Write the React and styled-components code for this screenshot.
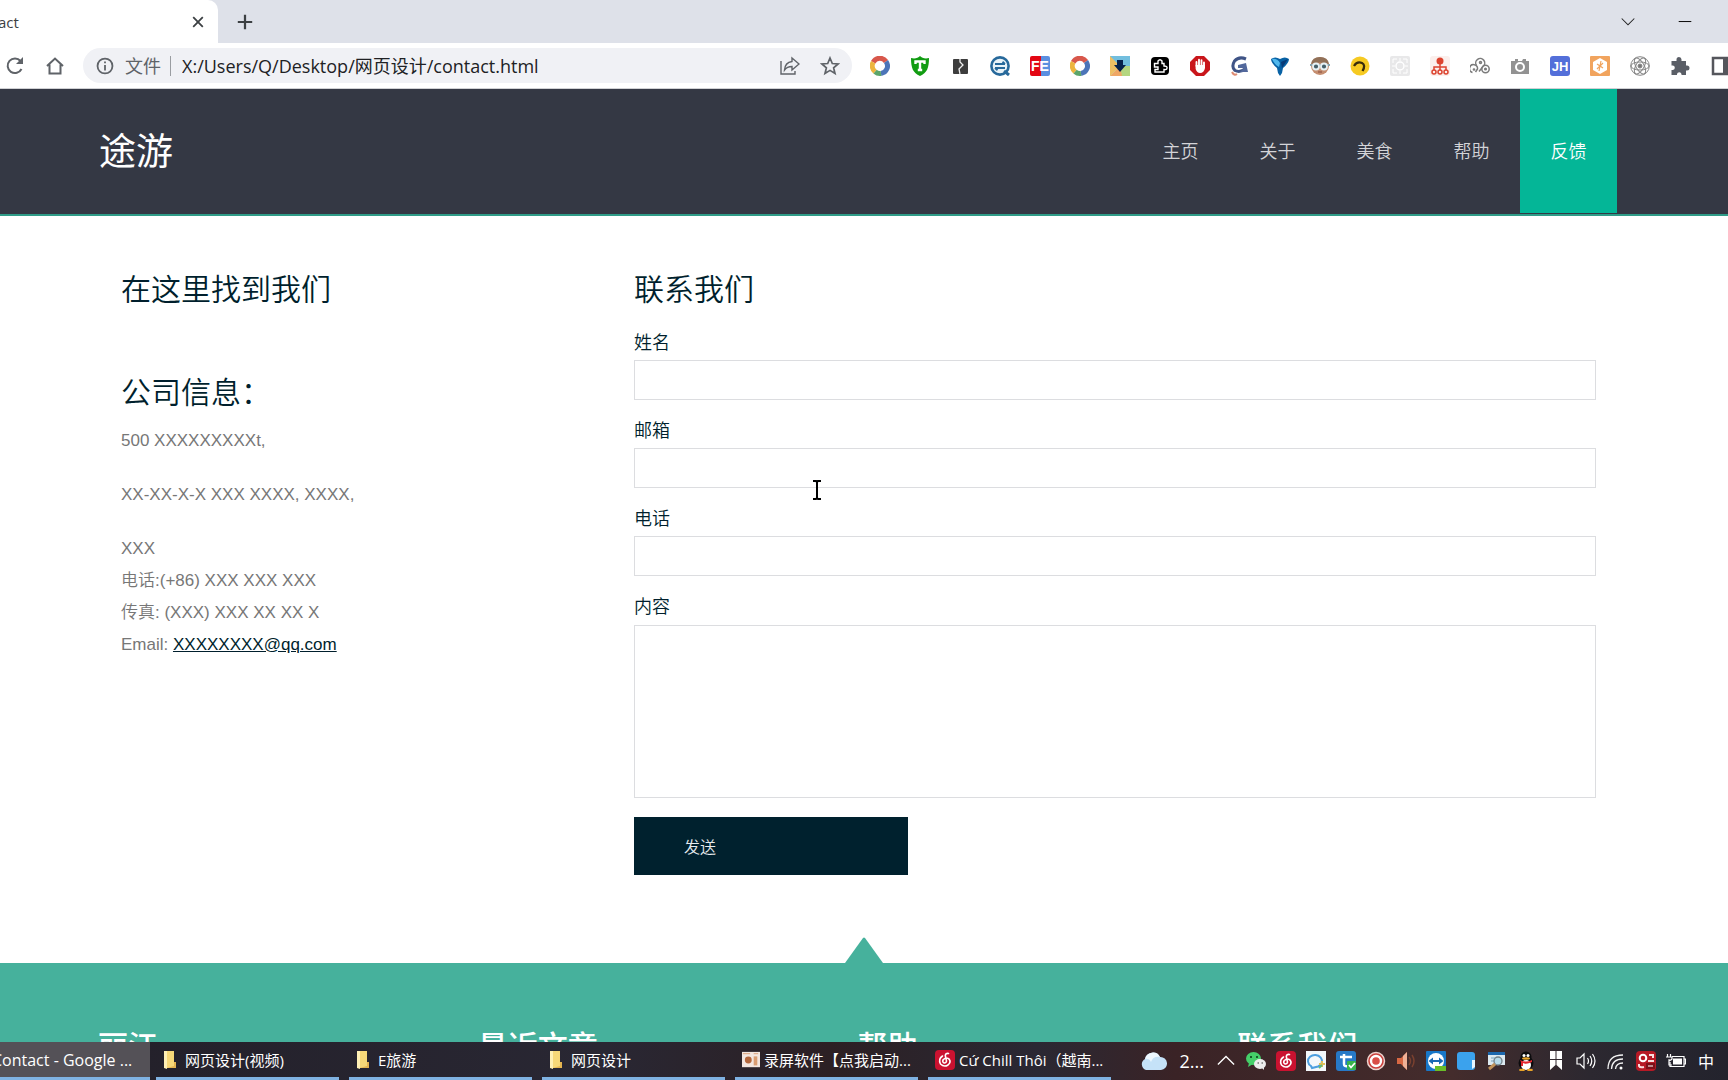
import React, { useState } from 'react';
import styled, { createGlobalStyle, css } from 'styled-components';

const uiFont = `'Open Sans', 'Noto Sans CJK SC', sans-serif`;
const pageFont = `'Liberation Sans', 'Noto Sans CJK SC', sans-serif`;

const GlobalStyle = createGlobalStyle`
    * { box-sizing: border-box; }
    body {
        margin: 0;
        font-family: ${pageFont};
        background: #fff;
    }
    h1, h2, p { margin: 0; font-weight: normal; }
    button { font: inherit; border: 0; padding: 0; background: none; cursor: pointer; }
    svg { flex: none; }
`;

// desktop + browser chrome
const Desktop = styled.div`
    display: flex;
    flex-direction: column;
    height: 100vh;
    overflow: hidden;
`;

const TabStrip = styled.div`
    display: flex;
    flex: none;
    align-items: center;
    height: 43px;
    background: #dee1e9;
    color: #3c4043;
`;

const Tab = styled.div`
    display: flex;
    align-items: center;
    justify-content: space-between;
    width: 218px;
    height: 43px;
    padding-right: 12px;
    background: #fff;
    border-top-right-radius: 10px;
    font: 15px ${uiFont};
    overflow: hidden;
`;

const TabTitle = styled.span`
    margin-left: -35px;
`;

const StripButton = styled.button`
    display: flex;
    align-items: center;
    justify-content: center;
    flex: none;
    width: ${props => props.$width};
    height: 38px;
    color: inherit;
`;

const Spacer = styled.div`
    flex: 1;
`;

const WindowButtons = styled.div`
    display: flex;
    margin-right: 15px;
`;

const Toolbar = styled.div`
    display: flex;
    flex: none;
    align-items: center;
    height: 46px;
    border-bottom: 1px solid #d0d1d4;
    background: #fff;
    color: #5f6368;
`;

const ToolButton = styled.button`
    display: flex;
    align-items: center;
    justify-content: center;
    flex: none;
    width: 40px;
    height: 35px;
    color: inherit;
`;

const NavButtons = styled.div`
    display: flex;
    margin: 0 8px 0 -5px;
`;

const AddressBar = styled.div`
    display: flex;
    flex: 1;
    align-items: center;
    min-width: 0;
    height: 35px;
    padding: 0 2px 0 13px;
    border-radius: 18px;
    background: #f0f1f5;
    font: 18px ${uiFont};
`;

const Scheme = styled.span`
    flex: none;
    margin-left: 11px;
    padding-right: 9px;
    border-right: 1px solid #9a9da1;
    line-height: 20px;
`;

const UrlInput = styled.input`
    flex: 1;
    min-width: 0;
    border: 0;
    padding: 0 0 2px 11px;
    outline: 0;
    background: none;
    color: #202124;
    font: 18px ${uiFont};
`;

const Extensions = styled.div`
    display: flex;
    flex: none;
    margin: 0 -12px 0 8px;
`;

// web page
const Page = styled.div`
    position: relative;
    display: flex;
    flex-direction: column;
    flex: 1;
    min-height: 0;
    overflow: hidden;
`;

const Header = styled.header`
    display: flex;
    flex: none;
    align-items: center;
    justify-content: space-between;
    height: 127px;
    padding: 0 111px 0 99px;
    border-bottom: 2px solid #2f9c88;
    background: #343844;
`;

const Logo = styled.h1`
    padding-bottom: 6px;
    color: #fff;
    font: 400 37px 'KaiTi', 'Noto Sans CJK SC', sans-serif;
`;

const Nav = styled.nav`
    display: flex;
    height: 100%;
    padding-bottom: 1px;
`;

const NavLink = styled.a`
    display: flex;
    align-items: center;
    justify-content: center;
    width: 97px;
    padding-bottom: 2px;
    color: #d3d4d8;
    font-size: 18px;
    font-weight: 350;
    text-decoration: none;
    ${props => props.$active && css`
        background: #04b697;
        color: #fff;
    `}
`;

const Content = styled.main`
    display: grid;
    grid-template-columns: 8fr 15fr;
    flex: none;
    padding: 52px 132px 88px 121px;
`;

const Title = styled.h2`
    color: #001f2d;
    font-size: 30px;
    font-weight: 350;
    line-height: 44px;
`;

const CompanyTitle = styled(Title)`
    margin-top: 59px;
    margin-bottom: 10px;
`;

const Address = styled.address`
    color: #777;
    font-size: 17px;
    font-style: normal;
    font-weight: 350;
    line-height: 32px;
`;

const AddressLine = styled.p`
    margin-bottom: ${props => props.$spaced ? '22px' : '0'};
    font-weight: inherit;
`;

const MailLink = styled.a`
    color: #001f2d;
`;

const Form = styled.form`
    display: flex;
    flex-direction: column;
    align-items: stretch;
    padding-top: 10px;
`;

const Label = styled.label`
    padding-top: 4px;
    color: #001f2d;
    font-size: 18px;
    font-weight: 350;
    line-height: 34px;
`;

const fieldStyle = css`
    width: 100%;
    border: 1px solid #dcdde0;
    border-radius: 0;
    padding: 8px;
    outline: 0;
    background: #fff;
    color: #001f2d;
    font: 16px ${pageFont};
`;

const TextInput = styled.input`
    ${fieldStyle}
    height: 40px;
    margin-bottom: 10px;
`;

const TextArea = styled.textarea`
    ${fieldStyle}
    height: 173px;
    margin: 1px 0 19px;
    resize: none;
`;

const SendButton = styled.button`
    align-self: flex-start;
    width: 274px;
    height: 58px;
    padding-left: 50px;
    background: #00212e;
    color: #e8ecee;
    font-size: 16px;
    font-weight: 350;
    text-align: left;
`;

const Footer = styled.footer`
    position: relative;
    display: grid;
    grid-template-columns: repeat(4, 1fr);
    flex: none;
    padding: 62px 111px 80px 98px;
    background: #46b19c;
`;

const FooterArrow = styled.svg`
    position: absolute;
    top: -26px;
    left: 50%;
    transform: translateX(-50%);
`;

const FooterTitle = styled.h2`
    color: #fff;
    font-size: 30px;
    font-weight: 500;
    line-height: 44px;
`;

const Cursor = styled.svg`
    position: absolute;
    top: 391px;
    left: 812px;
`;

// taskbar
const Taskbar = styled.div`
    display: flex;
    flex: none;
    height: 38px;
    padding-right: 7px;
    background: linear-gradient(90deg, #221f28 0%, #292733 35%, #2c2024 48%, #2a2833 60%, #3a2326 68%, #442c2c 84%, #2c2830 92%, #23232d 100%);
    color: #fff;
    font: 15px ${uiFont};
`;

const Task = styled.button`
    display: flex;
    align-items: center;
    gap: 4px;
    flex: none;
    width: 183px;
    height: 38px;
    margin-right: 10px;
    padding: 0 7px;
    border-bottom: 3px solid #7fb2e2;
    color: inherit;
    white-space: nowrap;
    ${props => props.$active && css`
        width: 187px;
        margin-left: -37px;
        margin-right: 6px;
        background: #545157;
        font-size: 16px;
    `}
`;

const Weather = styled.button`
    display: flex;
    align-items: center;
    gap: 13px;
    padding-right: 7px;
    color: inherit;
    font-size: 18px;
`;

const TrayButton = styled.button`
    display: flex;
    align-items: center;
    justify-content: center;
    flex: none;
    width: 30px;
    height: 38px;
    color: inherit;
    font-size: 16px;
`;

const Svg = ({ size = 20, children, ...rest }) => (
    <svg width={size} height={size} viewBox="0 0 20 20" fill="none" aria-hidden="true" {...rest}>{children}</svg>
);

const iconText = { fontFamily: 'Liberation Sans, sans-serif', fontWeight: 'bold', textAnchor: 'middle' };

const RingIcon = () => (
    <Svg strokeWidth="5">
        <path d="M3.2 6.2A7.5 7.5 0 0 1 16 5.5" stroke="#d8574b" />
        <path d="M16 5.5A7.5 7.5 0 0 1 11 17.4" stroke="#4c74b8" />
        <path d="M11 17.4A7.5 7.5 0 0 1 5 15.6" stroke="#5ba56a" />
        <path d="M5 15.6A7.5 7.5 0 0 1 3.2 6.2" stroke="#ecb53f" />
    </Svg>
);

const extensions = [
    { name: 'Colour ring', icon: <RingIcon /> },
    { name: 'Shield', icon: <Svg>
        <path d="M1 2C5 3 8 2 10 0C12 2 15 3 19 2C19 12 17 17 10 20C3 17 1 12 1 2Z" fill="#119c12" />
        <path d="M5.5 8V5.5H14.5V8M10 5.5V14M7.8 14H12.2" stroke="#fff" strokeWidth="2.4" />
    </Svg> },
    { name: 'Dark panel', icon: <Svg>
        <rect x="3" y="3" width="15" height="15" rx="1" fill="#3d3d3d" />
        <path d="M10 3V6L13 9L9 13L10 18" stroke="#eee" strokeWidth="1.3" />
    </Svg> },
    { name: 'Search swap', icon: <Svg>
        <circle cx="10" cy="10" r="8.6" fill="#e9f3f8" stroke="#27699b" strokeWidth="2.6" />
        <path d="M14 15L19 19" stroke="#27699b" strokeWidth="3" />
        <path d="M5 8H15M5 12H15M12.5 5.8L15 8M7.5 14.2L5 12" stroke="#27699b" strokeWidth="1.8" />
    </Svg> },
    { name: 'FE', icon: <Svg>
        <path d="M2 0H11V20H2Q0 20 0 18V2Q0 0 2 0Z" fill="#e30613" />
        <path d="M11 0H18Q20 0 20 2V18Q20 20 18 20H11Z" fill="#5b8fe0" />
        <text x="10" y="15" fontSize="14" fill="#fff" {...iconText}>FE</text>
    </Svg> },
    { name: 'Colour ring', icon: <RingIcon /> },
    { name: 'Download', icon: <Svg>
        <path d="M0 0H20V10H0Z" fill="#72bede" />
        <path d="M0 0L10 10L0 20Z" fill="#eebf63" />
        <path d="M0 20L10 10H20V20Z" fill="#b4d680" />
        <path d="M0 20L10 10L12 20Z" fill="#efa765" />
        <path d="M7 4H13V9H16L10 16L4 9H7Z" fill="#07224d" />
    </Svg> },
    { name: 'Puzzle', icon: <Svg>
        <rect x="1" y="1" width="18" height="18" rx="4" fill="#000" />
        <path d="M8 7.5V5Q10 2.5 12 5V7.5H14V10Q17.5 10 17 12Q17 14 14 13.5V16H5V13.5H8V11H4.5V7.5Z" stroke="#fff" strokeWidth="1.4" />
    </Svg> },
    { name: 'Ad blocker', icon: <Svg>
        <path d="M6 0H14L20 6V14L14 20H6L0 14V6Z" fill="#c9161b" />
        <path d="M6.5 10V6M9 9V3.8M11.5 9V4.3M14 11V6.5" stroke="#fff" strokeWidth="1.9" strokeLinecap="round" />
        <path d="M5.6 9H15V12Q14 17 10 17Q7 17 5.6 13Z" fill="#fff" />
    </Svg> },
    { name: 'G swirl', icon: <Svg>
        <path d="M16 3Q9 0 4.5 5Q1 11 5 14.5Q10 17 15 13" stroke="#3f5486" strokeWidth="3" />
        <path d="M8 9L16 7L18 16H10L14 12H8Z" fill="#52689c" />
        <path d="M2 16Q4 20 7 18" stroke="#dd8b73" strokeWidth="2" />
    </Svg> },
    { name: 'Funnel', icon: <Svg>
        <path d="M1 3Q5 0 10 3Q15 0 19 3Q19 7 13 12L12 17L10 20L8 17L7 12Q1 7 1 3Z" fill="#0862a5" />
        <path d="M2 3Q7 2 10 7L9 11Q4 8 2 3Z" fill="#51b8ed" />
        <path d="M11 6L18 3L12 12Z" fill="#083b78" />
    </Svg> },
    { name: 'Face', icon: <Svg>
        <circle cx="10" cy="10" r="9" fill="#c58e70" />
        <path d="M1 8Q2 1 10 1Q18 1 19 8Q10 5 1 8Z" fill="#917058" />
        <path d="M0 9H20" stroke="#8aa2ac" strokeWidth="2" />
        <circle cx="6" cy="10.5" r="3" fill="#46606b" stroke="#e7f1f5" strokeWidth="1.8" />
        <circle cx="14" cy="10.5" r="3" fill="#46606b" stroke="#e7f1f5" strokeWidth="1.8" />
        <path d="M8 16H12" stroke="#874b3c" />
    </Svg> },
    { name: 'Yellow arc', icon: <Svg>
        <circle cx="10" cy="10" r="9.5" fill="#f6ca22" />
        <path d="M4 10Q7 5 12 7Q16 9 12.5 15" stroke="#382c0c" strokeWidth="2.3" />
    </Svg> },
    { name: 'Pale pattern', icon: <Svg>
        <rect width="20" height="20" rx="2" fill="#e8e8e9" />
        <circle cx="10" cy="10" r="4" stroke="#fff" strokeWidth="1.5" />
        <path d="M3 3H7M13 3H17M3 17H7M13 17H17M3 3V7M17 3V7M3 13V17M17 13V17M10 2V5M10 15V18M2 10H5M15 10H18" stroke="#fff" />
    </Svg> },
    { name: 'Sitemap', icon: <Svg>
        <rect width="20" height="20" rx="3" fill="#fbefec" />
        <circle cx="10" cy="5" r="3.5" fill="#dc432f" />
        <path d="M10 8V14M4 14V11H16V14" stroke="#dc432f" strokeWidth="1.5" />
        <circle cx="4" cy="16" r="2" stroke="#dc432f" strokeWidth="1.5" />
        <circle cx="10" cy="16" r="2" stroke="#dc432f" strokeWidth="1.5" />
        <circle cx="16" cy="16" r="2" stroke="#dc432f" strokeWidth="1.5" />
    </Svg> },
    { name: 'Cloud rings', icon: <Svg stroke="#7b7b7b" strokeWidth="1.5">
        <path d="M2.5 16.5A4 4 0 1 1 7.5 13L5.500 16" />
        <path d="M6.500 9.500A4.500 4.500 0 1 1 13 10.500L9 15.500" />
        <circle cx="15.5" cy="13" r="3.7" />
        <circle cx="10.5" cy="6.5" r="1" />
        <circle cx="15.5" cy="13" r=".8" />
        <circle cx="4" cy="13.500" r=".6" />
    </Svg> },
    { name: 'Camera', icon: <Svg>
        <path d="M1 5H5V3H8V5H12L13 3H16V5H19V18H1Z" fill="#929292" />
        <circle cx="10" cy="11" r="4" fill="#929292" stroke="#fff" strokeWidth="2" />
    </Svg> },
    { name: 'JH', icon: <Svg>
        <rect width="20" height="20" rx="3" fill="#536fd9" />
        <text x="10" y="15" fontSize="13" fill="#fff" {...iconText}>JH</text>
    </Svg> },
    { name: 'Hexagon', icon: <Svg>
        <rect width="20" height="20" rx="1" fill="#f1a45e" />
        <path d="M10 2L17 6V14L10 18L3 14V6Z" fill="#fff" />
        <path d="M11 5L10 10L9 15M7 8L13 12M13 7L7 13" stroke="#f1a45e" strokeWidth="1.2" />
    </Svg> },
    { name: 'Atom', icon: <Svg stroke="#858585">
        <circle cx="10" cy="10" r="9.3" />
        <ellipse cx="10" cy="10" rx="9" ry="4" />
        <ellipse cx="10" cy="10" rx="9" ry="4" transform="rotate(60 10 10)" />
        <ellipse cx="10" cy="10" rx="9" ry="4" transform="rotate(120 10 10)" />
        <circle cx="10" cy="10" r="2" fill="#777" />
    </Svg> },
    { name: 'Extensions', icon: <Svg>
        <path d="M1.5 5H6.5V3.5A2.5 2.5 0 0 1 11.5 3.5V5H16V9.5H17A2.5 2.5 0 0 1 17 14.5H16V19H11.5V18A2.3 2.3 0 0 0 7 18V19H1.5V14H3A2.3 2.3 0 0 0 3 9.5H1.5Z" fill="#5a5e66" />
    </Svg> },
    { name: 'Side panel', icon: <Svg>
        <rect x="3" y="2" width="18" height="16" stroke="#55565c" strokeWidth="2.5" />
        <rect x="13" y="2" width="8" height="16" fill="#55565c" />
    </Svg> },
];

const FolderIcon = () => (
    <svg width="18" height="20" viewBox="0 0 18 20" aria-hidden="true">
        <path d="M1 1H11V13H13V18H1Z" fill="#f7d878" />
        <path d="M1 1H4V19L1 18Z" fill="#fff0b5" />
        <path d="M11 12H13V18H4L11 16Z" fill="#e4b450" />
    </svg>
);

const CloudMusicIcon = () => (
    <Svg>
        <rect width="20" height="20" rx="4" fill="#ca1230" />
        <path d="M13.5 3.5Q10.5 3 10.3 5.5L11.5 11A1.9 1.9 0 1 1 8.5 9.5Q11 6.8 14 9Q16.5 12 13 15Q9 17.5 5.5 14Q3 9 7.5 6" stroke="#fff" strokeWidth="1.6" strokeLinecap="round" />
    </Svg>
);

const RecorderIcon = () => (
    <Svg size={18}>
        <rect y="1" width="20" height="17" fill="#f3e6df" />
        <circle cx="7" cy="10" r="3.8" fill="#b4673c" />
        <rect x="13" y="6" width="4" height="10" fill="#d99c71" />
        <path d="M1 3H9M13 3H18" stroke="#d99c71" />
    </Svg>
);

const tasks = [
    { title: 'Contact - Google ...', icon: <Svg size={18} />, active: true },
    { title: '网页设计(视频)', icon: <FolderIcon /> },
    { title: 'E旅游', icon: <FolderIcon /> },
    { title: '网页设计', icon: <FolderIcon /> },
    { title: '录屏软件【点我启动...', icon: <RecorderIcon /> },
    { title: 'Cứ Chill Thôi（越南...', icon: <CloudMusicIcon /> },
];

const tray = [
    { name: 'Show hidden icons', icon: <Svg size={18}><path d="M1 14L10 5L19 14" stroke="#fff" strokeWidth="1.5" /></Svg> },
    { name: 'WeChat', icon: <Svg>
        <ellipse cx="7.5" cy="7.5" rx="7.5" ry="6.5" fill="#45cf69" />
        <path d="M3 12L2 16L7 13" fill="#45cf69" />
        <ellipse cx="14" cy="13" rx="6" ry="5" fill="#ececec" />
        <path d="M16 17L18 19V16" fill="#ececec" />
        <path d="M4 6H6M10 6H12" stroke="#175c2a" strokeWidth="2" />
        <path d="M11.5 12H13M15.5 12H17" stroke="#777" strokeWidth="1.5" />
    </Svg> },
    { name: 'Cloud music', icon: <CloudMusicIcon /> },
    { name: 'Chat', icon: <Svg>
        <rect width="20" height="20" fill="#f4f8fb" />
        <path d="M5 15A7 6 0 1 1 12 15.5L6 17Z" stroke="#4d9fe0" strokeWidth="2" />
        <path d="M16 10V16M13 13H19" stroke="#dfbf58" strokeWidth="2" />
        <path d="M13 17L16 14" stroke="#63b978" strokeWidth="2" />
    </Svg> },
    { name: 'Sync', icon: <Svg>
        <rect width="20" height="20" rx="3" fill="#2779c7" />
        <path d="M4 6H16M8 3V13Q8 16 12 15" stroke="#fff" strokeWidth="2.5" />
        <rect x="11" y="10" width="9" height="9" rx="1" fill="#37b34a" />
        <path d="M13 14L15 16.5L19 12" stroke="#fff" strokeWidth="1.7" />
    </Svg> },
    { name: 'Record', icon: <Svg>
        <circle cx="10" cy="10" r="8.5" fill="#ca403c" stroke="#ecd3ce" strokeWidth="1.5" />
        <circle cx="10" cy="10" r="5" fill="#d94f47" stroke="#fff" strokeWidth="2.4" />
    </Svg> },
    { name: 'Sound', icon: <Svg>
        <path d="M1 7H5L11 1V19L5 13H1Z" fill="#d86843" />
        <path d="M7 5L11 1V19L7 15Z" fill="#efb197" />
        <path d="M13 6Q16 10 13 14M16 4Q20 10 16 16" stroke="#79402f" strokeWidth="1.5" />
    </Svg> },
    { name: 'Remote desktop', icon: <Svg>
        <rect width="20" height="20" rx="1" fill="#1877c8" />
        <circle cx="10" cy="10" r="8" fill="#fff" />
        <path d="M2.5 10L7 6.5V9H13V6.5L17.5 10L13 13.5V11H7V13.5Z" fill="#1768b4" />
        <rect x="9" y="15" width="11" height="5" fill="#69bd28" />
    </Svg> },
    { name: 'Notes', icon: <Svg>
        <rect x="1" y="1" width="18" height="18" rx="3" fill="#3ba2ed" />
        <path d="M16 9H19V16L16 18Z" fill="#e6f5ff" />
    </Svg> },
    { name: 'Inspector', icon: <Svg>
        <rect x="2" y="1" width="17" height="13" fill="#dce9f0" />
        <path d="M2 2.5H19" stroke="#1c67ad" strokeWidth="3" />
        <path d="M5 7H12M5 10H10" stroke="#7ba5be" />
        <circle cx="12" cy="10" r="4" fill="#b6dbea" stroke="#73828a" strokeWidth="1.3" />
        <path d="M9 13L3 18" stroke="#bf925a" strokeWidth="3" />
    </Svg> },
    { name: 'QQ', icon: <Svg>
        <ellipse cx="10" cy="12" rx="7.5" ry="7" fill="#0b0b0d" />
        <circle cx="10" cy="6" r="5.5" fill="#0b0b0d" />
        <ellipse cx="10" cy="14" rx="5" ry="5" fill="#fff" />
        <circle cx="8" cy="4.5" r="1.5" fill="#fff" />
        <circle cx="12" cy="4.5" r="1.5" fill="#fff" />
        <ellipse cx="10" cy="7.5" rx="4" ry="1.2" fill="#e9a327" />
        <path d="M4 9Q10 12 16 9L16 11Q10 14 7 12V15H5V11Z" fill="#e3262d" />
        <ellipse cx="6" cy="19" rx="3" ry="1.2" fill="#e9a327" />
        <ellipse cx="14" cy="19" rx="3" ry="1.2" fill="#e9a327" />
    </Svg> },
    { name: 'Bookmark', icon: <Svg>
        <path d="M4 0H9.5V8H4ZM10.5 0H16V8H10.5ZM4 9H9.5V14L4 19ZM10.5 9H16V19L10.5 14Z" fill="#fff" />
    </Svg> },
    { name: 'Volume', icon: <Svg stroke="#fff" strokeWidth="1.2">
        <path d="M1 7H4L8 3V17L4 13H1Z" />
        <path d="M11.500 7Q13.5 10 11.5 13M14 5Q17.5 10 14 15M16.5 3Q21.5 10 16.5 17" />
    </Svg> },
    { name: 'Wi-Fi', icon: <Svg stroke="#f3f3f3" strokeWidth="1.3">
        <path d="M2 18Q2 4 17 4M5.5 18Q6 8 17 8M9.5 18Q10 12 17 12" />
        <circle cx="15" cy="17" r="1.5" fill="#fff" stroke="none" />
    </Svg> },
    { name: 'Capture', icon: <Svg>
        <rect width="20" height="20" rx="4" fill="#b71925" />
        <circle cx="7" cy="7" r="3.3" stroke="#fff" strokeWidth="2" />
        <path d="M13 4H17V7M3 13V15Q4 17 8 16M12 10H18" stroke="#f8dede" strokeWidth="2" />
        <rect x="10" y="12" width="9" height="6" fill="#7d1018" />
        <path d="M12 15H17" stroke="#fff" />
    </Svg> },
    { name: 'Battery', icon: <Svg stroke="#fff" strokeWidth="1.2">
        <path d="M6 5.5H18V15.5H4V11M18 8H19.5V13H18" />
        <rect x="7" y="7.5" width="9" height="6" fill="#fff" stroke="none" />
        <path d="M1.5 3V6M4.5 3V6M0 6H6V8Q3 11 3 8M3 9V14H6" />
    </Svg> },
    { name: 'Input method', icon: '中' },
];

const navItems = ['主页', '关于', '美食', '帮助', '反馈'];
const fields = [
    { id: 'name', label: '姓名', type: 'text' },
    { id: 'email', label: '邮箱', type: 'email' },
    { id: 'phone', label: '电话', type: 'tel' },
];
const footerTitles = ['丽江', '最近文章', '帮助', '联系我们'];

const BrowserBar = () => {
    const [url, setUrl] = useState('X:/Users/Q/Desktop/网页设计/contact.html');

    return (
        <>
            <TabStrip>
                <Tab>
                    <TabTitle>Contact</TabTitle>
                    <StripButton $width="16px" aria-label="Close tab">
                        <Svg size={12}><path d="M2 2L18 18M18 2L2 18" stroke="#3c4043" strokeWidth="3" /></Svg>
                    </StripButton>
                </Tab>
                <StripButton $width="54px" aria-label="New tab">
                    <Svg size={16}><path d="M10 1V19M1 10H19" stroke="#3c4043" strokeWidth="2.8" /></Svg>
                </StripButton>
                <Spacer />
                <WindowButtons>
                    <StripButton $width="57px" aria-label="Search tabs">
                        <Svg size={14}><path d="M1 5L10 14L19 5" stroke="#222" strokeWidth="1.5" /></Svg>
                    </StripButton>
                    <StripButton $width="57px" aria-label="Minimise">
                        <Svg size={14}><path d="M1 9.3H19" stroke="#111" strokeWidth="1.5" /></Svg>
                    </StripButton>
                </WindowButtons>
            </TabStrip>
            <Toolbar>
                <NavButtons>
                    <ToolButton aria-label="Reload">
                        <Svg stroke="currentColor" strokeWidth="2"><path d="M16.5 13A7.3 7.3 0 1 1 15.5 5" /><path d="M18 1V8H11Z" fill="currentColor" stroke="none" /></Svg>
                    </ToolButton>
                    <ToolButton aria-label="Home">
                        <Svg stroke="currentColor" strokeWidth="2"><path d="M2 10L10 2.5L18 10M4.5 8.5V17.5H15.5V8.5" /></Svg>
                    </ToolButton>
                </NavButtons>
                <AddressBar>
                    <Svg size={18} stroke="currentColor" strokeWidth="2"><circle cx="10" cy="10" r="8.3" /><path d="M10 9V15M10 5V7" /></Svg>
                    <Scheme>文件</Scheme>
                    <UrlInput aria-label="Address" value={url} onChange={e => setUrl(e.target.value)} />
                    <ToolButton aria-label="Share">
                        <Svg stroke="currentColor" strokeWidth="1.4"><path d="M1 5V18H15V15" /><path d="M12 2L19 8L12 14V10.5Q7 10.5 4.5 14Q5 6.5 12 5.5Z" /></Svg>
                    </ToolButton>
                    <ToolButton aria-label="Bookmark this page">
                        <Svg stroke="currentColor" strokeWidth="1.7"><path d="M10 2L12.3 7.5L18 8L13.6 11.8L15 17.5L10 14.4L5 17.5L6.4 11.8L2 8L7.7 7.5Z" /></Svg>
                    </ToolButton>
                </AddressBar>
                <Extensions>
                    {extensions.map((ext, i) => <ToolButton key={i} aria-label={ext.name}>{ext.icon}</ToolButton>)}
                </Extensions>
            </Toolbar>
        </>
    );
};

const ContactForm = () => {
    const handleSubmit = (e) => {
        e.preventDefault();
    };

    return (
        <section>
            <Title>联系我们</Title>
            <Form onSubmit={handleSubmit}>
                {fields.map(field => (
                    <React.Fragment key={field.id}>
                        <Label htmlFor={field.id}>{field.label}</Label>
                        <TextInput id={field.id} type={field.type} />
                    </React.Fragment>
                ))}
                <Label htmlFor="message">内容</Label>
                <TextArea id="message" />
                <SendButton type="submit">发送</SendButton>
            </Form>
        </section>
    );
};

const App = () => (
    <Desktop>
        <GlobalStyle />
        <BrowserBar />
        <Page>
            <Header>
                <Logo>途游</Logo>
                <Nav>
                    {navItems.map(item => <NavLink key={item} href="#" $active={item === '反馈'}>{item}</NavLink>)}
                </Nav>
            </Header>
            <Content>
                <section>
                    <Title>在这里找到我们</Title>
                    <CompanyTitle>公司信息：</CompanyTitle>
                    <Address>
                        <AddressLine $spaced>500 XXXXXXXXXt,</AddressLine>
                        <AddressLine $spaced>XX-XX-X-X XXX XXXX, XXXX,</AddressLine>
                        <AddressLine>XXX</AddressLine>
                        <AddressLine>电话:(+86) XXX XXX XXX</AddressLine>
                        <AddressLine>传真: (XXX) XXX XX XX X</AddressLine>
                        <AddressLine>Email: <MailLink href="mailto:XXXXXXXX@qq.com">XXXXXXXX@qq.com</MailLink></AddressLine>
                    </Address>
                </section>
                <ContactForm />
            </Content>
            <Footer>
                <FooterArrow width="38" height="26" viewBox="0 0 38 26" aria-hidden="true">
                    <path d="M0 26L18 1Q19 0 20 1L38 26Z" fill="#46b19c" />
                </FooterArrow>
                {footerTitles.map(title => <FooterTitle key={title}>{title}</FooterTitle>)}
            </Footer>
            <Cursor width="10" height="20" viewBox="0 0 10 20" fill="none" aria-hidden="true">
                <path d="M1 1H4L5 2L6 1H9M5 2V18M1 19H4L5 18L6 19H9" stroke="#000" strokeWidth="2" />
            </Cursor>
        </Page>
        <Taskbar>
            {tasks.map(task => (
                <Task key={task.title} $active={task.active}>{task.icon}{task.title}</Task>
            ))}
            <Spacer />
            <Weather>
                <svg width="27" height="20" viewBox="0 0 27 20" aria-hidden="true">
                    <path d="M6 19A6 6 0 0 1 5 8A8 8 0 0 1 20 6A6.5 6.5 0 0 1 21 19Z" fill="#c5e2f8" />
                    <path d="M5 8A8 8 0 0 1 20 6Q13 5 11 11Q9 7 5 8Z" fill="#eef8ff" />
                </svg>
                2...
            </Weather>
            {tray.map(item => <TrayButton key={item.name} aria-label={item.name}>{item.icon}</TrayButton>)}
        </Taskbar>
    </Desktop>
);

export default App;
